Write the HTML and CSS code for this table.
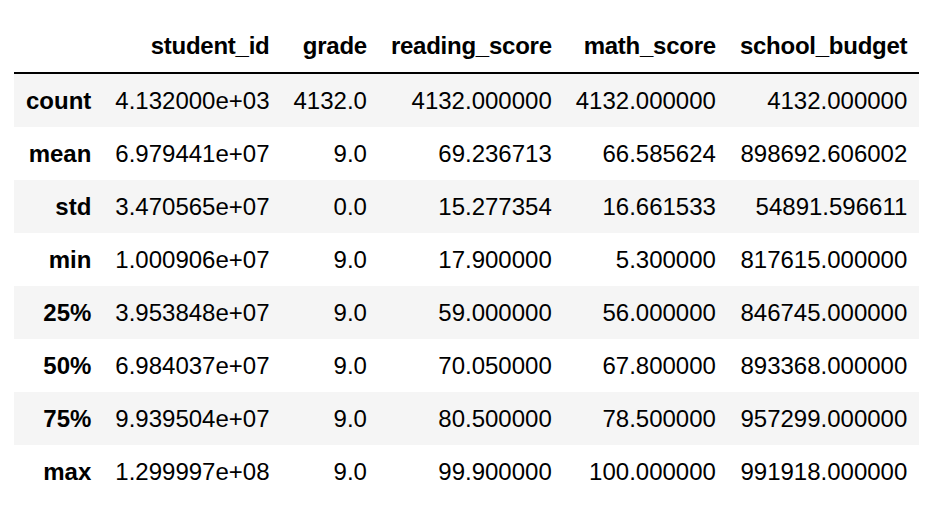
FILE: index.html
```html
<!DOCTYPE html>
<html>
<head>
<meta charset="utf-8">
<link rel="stylesheet" href="styles.css">
</head>
<body>
<table class="df">
  <thead>
    <tr><th></th><th>student_id</th><th>grade</th><th>reading_score</th><th>math_score</th><th>school_budget</th></tr>
  </thead>
  <tbody>
    <tr><th>count</th><td>4.132000e+03</td><td>4132.0</td><td>4132.000000</td><td>4132.000000</td><td>4132.000000</td></tr>
    <tr><th>mean</th><td>6.979441e+07</td><td>9.0</td><td>69.236713</td><td>66.585624</td><td>898692.606002</td></tr>
    <tr><th>std</th><td>3.470565e+07</td><td>0.0</td><td>15.277354</td><td>16.661533</td><td>54891.596611</td></tr>
    <tr><th>min</th><td>1.000906e+07</td><td>9.0</td><td>17.900000</td><td>5.300000</td><td>817615.000000</td></tr>
    <tr><th>25%</th><td>3.953848e+07</td><td>9.0</td><td>59.000000</td><td>56.000000</td><td>846745.000000</td></tr>
    <tr><th>50%</th><td>6.984037e+07</td><td>9.0</td><td>70.050000</td><td>67.800000</td><td>893368.000000</td></tr>
    <tr><th>75%</th><td>9.939504e+07</td><td>9.0</td><td>80.500000</td><td>78.500000</td><td>957299.000000</td></tr>
    <tr><th>max</th><td>1.299997e+08</td><td>9.0</td><td>99.900000</td><td>100.000000</td><td>991918.000000</td></tr>
  </tbody>
</table>
</body>
</html>
```
FILE: styles.css
```css
html, body {
  margin: 0;
  background: #fff;
}
body {
  padding: 19px 0 0 14px;
  font-family: "Liberation Sans", Arial, sans-serif;
  color: #000;
}
.df {
  border-collapse: collapse;
  border-spacing: 0;
  font-size: 24px;
}
.df th, .df td {
  padding: 12px 12px;
  line-height: 29px;
  text-align: right;
  vertical-align: middle;
  white-space: nowrap;
}
.df th {
  font-weight: bold;
}
.df td {
  font-weight: normal;
}
.df thead th {
  border-bottom: 2px solid #000;
  letter-spacing: -0.25px;
}
.df tbody tr:nth-child(odd) {
  background: #f5f5f5;
}
```
